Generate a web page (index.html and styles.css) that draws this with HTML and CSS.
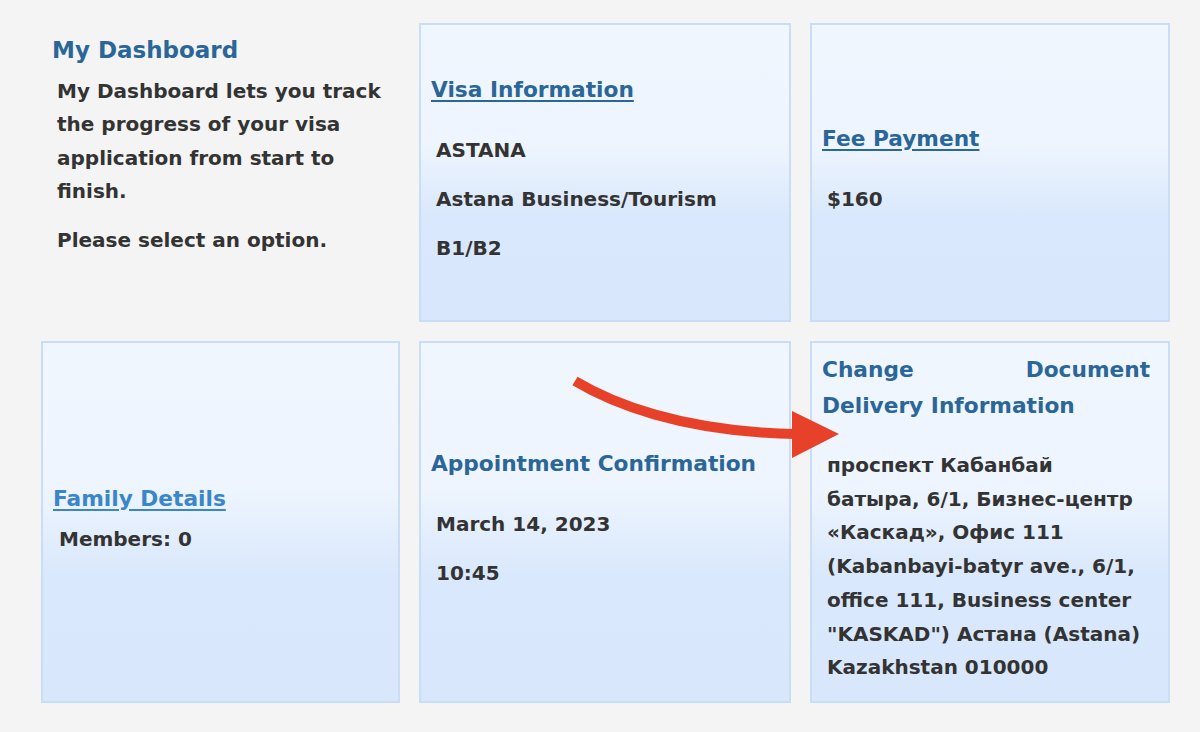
FILE: index.html
```html
<!DOCTYPE html>
<html lang="en">
<head>
<meta charset="utf-8">
<title>My Dashboard</title>
<link rel="stylesheet" href="styles.css">
</head>
<body>
<main class="dashboard">
  <section class="intro">
    <h1 class="intro-title">My Dashboard</h1>
    <p class="intro-text">My Dashboard lets you track the progress of your visa application from start to finish.</p>
    <p class="intro-text">Please select an option.</p>
  </section>

  <section class="card">
    <a class="card-link" href="#">Visa Information</a>
    <ul class="card-list">
      <li>ASTANA</li>
      <li>Astana Business/Tourism</li>
      <li>B1/B2</li>
    </ul>
  </section>

  <section class="card card-narrow">
    <a class="card-link" href="#">Fee Payment</a>
    <ul class="card-list">
      <li>$160</li>
    </ul>
  </section>

  <section class="card card-narrow">
    <a class="card-link card-link-light" href="#">Family Details</a>
    <p class="members">Members: 0</p>
  </section>

  <section class="card">
    <h2 class="card-title">Appointment Confirmation</h2>
    <ul class="card-list">
      <li>March 14, 2023</li>
      <li>10:45</li>
    </ul>
  </section>

  <section class="card card-narrow card-top">
    <h2 class="card-title card-title-justify">Change Document Delivery Information</h2>
    <p class="address">проспект Кабанбай батыра, 6/1, Бизнес-центр «Каскад», Офис 111 (Kabanbayi-batyr ave., 6/1, office 111, Business center "KASKAD") Астана (Astana) Kazakhstan 010000</p>
  </section>

  <svg class="arrow" width="1200" height="732" viewBox="0 0 1200 732" aria-hidden="true">
    <path d="M575 381 C610 402 680 432 796 434" fill="none" stroke="#e8412a" stroke-width="10" stroke-linecap="butt"/>
    <polygon points="792,411 839,434 792,458" fill="#e8412a"/>
  </svg>
</main>
</body>
</html>
```

FILE: styles.css
```css
* {
  box-sizing: border-box;
}

html, body {
  margin: 0;
  padding: 0;
  background: #f4f4f4;
}

body {
  font-family: "DejaVu Sans", Verdana, sans-serif;
  font-weight: bold;
  color: #333333;
  font-size: 20px;
}

.dashboard {
  position: relative;
  width: 1200px;
  height: 732px;
  padding: 23px 0 0 41px;
  display: grid;
  grid-template-columns: 359px 372px 360px;
  grid-template-rows: 299px 362px;
  column-gap: 19px;
  row-gap: 19px;
  align-content: start;
}

.intro {
  padding: 12px 0 0 11px;
}

.intro-title {
  margin: 0 0 10px 0;
  font-size: 23px;
  line-height: 30px;
  color: #2b6699;
}

.intro-text {
  margin: 0 0 16px 5px;
  font-size: 20px;
  line-height: 33.3px;
  width: 330px;
}

.card {
  border: 2px solid #c9def6;
  background: linear-gradient(to bottom, #eff6fe 0%, #eef5fe 40%, #d9e8fc 65%, #d8e7fc 100%);
  display: flex;
  flex-direction: column;
  justify-content: center;
  padding: 0 18px 7px 10px;
}

.card-top {
  justify-content: flex-start;
  padding-top: 9px;
}

.card-link {
  color: #2b6699;
  font-size: 21.7px;
  line-height: 30px;
  text-decoration: underline;
  text-decoration-thickness: 2px;
  text-underline-offset: 3px;
  align-self: flex-start;
}

.card-link-light {
  color: #3a86c8;
}

.card-title {
  margin: 0;
  color: #2b6699;
  font-size: 21.7px;
  line-height: 30px;
}

.card-title-justify {
  text-align: justify;
  line-height: 36px;
}

.card-list {
  list-style: none;
  margin: 30px 0 0 0;
  padding: 0 0 0 5px;
  font-size: 20px;
}

.card-list li {
  line-height: 30px;
  margin-bottom: 19px;
}

.card-list li:last-child {
  margin-bottom: 0;
}

.members {
  margin: 10px 0 0 6px;
  font-size: 20px;
  line-height: 30px;
}

.address {
  margin: 25px 0 0 5px;
  font-size: 20px;
  line-height: 33.7px;
}

.arrow {
  position: absolute;
  left: 0;
  top: 0;
  pointer-events: none;
}
```
